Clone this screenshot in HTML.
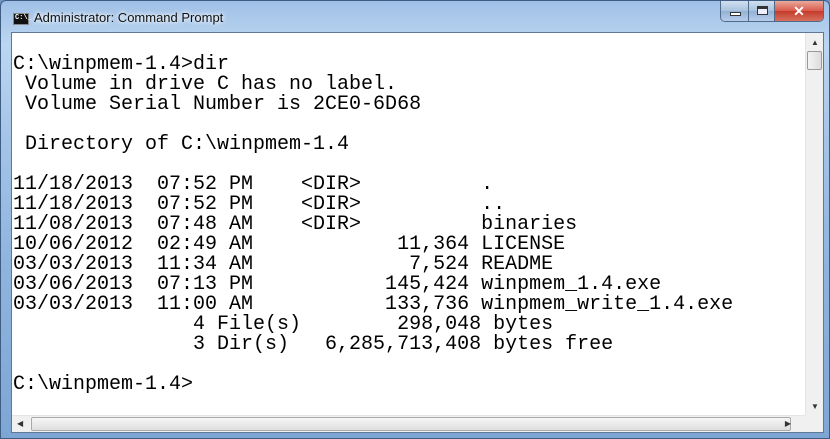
<!DOCTYPE html>
<html><head><meta charset="utf-8"><style>
*{margin:0;padding:0;box-sizing:border-box}
html,body{width:830px;height:439px;overflow:hidden;background:#6f97c4}
.win{position:absolute;left:0;top:0;width:830px;height:439px;
background:linear-gradient(180deg,#9fc0e6 0%,#bcd6f1 10%,#a6c5e8 30%,#8fb4de 60%,#7ea6d4 100%);
border:1px solid #3f5d82;border-radius:6px 6px 0 0}
.title{position:absolute;left:33px;top:9px;font:13px "Liberation Sans",sans-serif;color:#111;text-shadow:0 0 6px #fff,0 0 4px #fff}
.ico{position:absolute;left:12px;top:12px;width:16px;height:12px;background:#111;border:1px solid #888}
.ico span{position:absolute;left:1px;top:1px;font:bold 7px "Liberation Mono",monospace;color:#fff;line-height:7px}
.btns{position:absolute;left:719px;top:0;width:104px;height:21px;border:1px solid #4f6a8a;border-top:none;border-radius:0 0 5px 5px;overflow:hidden;display:flex}
.b{height:20px;background:linear-gradient(#cfdff0,#a9c1de 50%,#93b1d6 51%,#b5cde8);border-right:1px solid #4f6a8a;position:relative}
.b1{width:28px}.b2{width:26px}
.b3{flex:1;background:linear-gradient(#e9a99c,#d9594a 50%,#c43a2a 51%,#d7705e);border-right:none;color:#fff;font:bold 14px "Liberation Sans",sans-serif;text-align:center;line-height:20px}
.b1 i{position:absolute;left:9px;top:11px;width:11px;height:4px;background:#fff;border:1px solid #333}
.b2 i{position:absolute;left:8px;top:5px;width:11px;height:9px;border:1px solid #333;border-top:3px solid #333;background:#eef}
.client{position:absolute;left:10px;top:31px;width:813px;height:401px;border:1px solid #5f7898;background:#fff}
pre{position:absolute;left:1px;top:2px;font:20px/20px "Liberation Mono",monospace;color:#000;padding-top:20px;letter-spacing:0}
.vs{position:absolute;right:0;top:0;width:18px;height:382px;background:#f0f0f0;border-left:1px solid #e4e4e4}
.thumb{position:absolute;left:1px;top:18px;width:15px;height:19px;border:1px solid #999;border-radius:2px;background:linear-gradient(90deg,#f4f4f4,#dcdcdc)}
.hs{position:absolute;left:0;bottom:0;width:795px;height:17px;background:#f0f0f0;border-top:1px solid #e4e4e4}
.hthumb{position:absolute;left:19px;top:1px;width:760px;height:14px;border:1px solid #aaa;border-radius:2px;background:linear-gradient(#f6f6f6,#dedede)}
.corner{position:absolute;right:0;bottom:0;width:18px;height:17px;background:#f0f0f0}
.ar{position:absolute;font:8px "Liberation Sans",sans-serif;color:#333}
</style></head><body>
<div class="win">
<div class="ico"><span>C:\_</span></div>
<div class="title">Administrator: Command Prompt</div>
<div class="btns"><div class="b b1"><i></i></div><div class="b b2"><i></i></div><div class="b b3">✕</div></div>
<div class="client">
<pre>C:\winpmem-1.4&gt;dir
 Volume in drive C has no label.
 Volume Serial Number is 2CE0-6D68

 Directory of C:\winpmem-1.4

11/18/2013  07:52 PM    &lt;DIR&gt;          .
11/18/2013  07:52 PM    &lt;DIR&gt;          ..
11/08/2013  07:48 AM    &lt;DIR&gt;          binaries
10/06/2012  02:49 AM            11,364 LICENSE
03/03/2013  11:34 AM             7,524 README
03/06/2013  07:13 PM           145,424 winpmem_1.4.exe
03/03/2013  11:00 AM           133,736 winpmem_write_1.4.exe
               4 File(s)        298,048 bytes
               3 Dir(s)   6,285,713,408 bytes free

C:\winpmem-1.4&gt;</pre>
<div class="vs"><span class="ar" style="left:5px;top:5px">▲</span><div class="thumb"></div><span class="ar" style="left:5px;bottom:4px">▼</span></div>
<div class="hs"><span class="ar" style="left:5px;top:3px">◀</span><div class="hthumb"></div><span class="ar" style="right:16px;top:3px">▶</span></div>
<div class="corner"></div>
</div>
</div>
</body></html>
